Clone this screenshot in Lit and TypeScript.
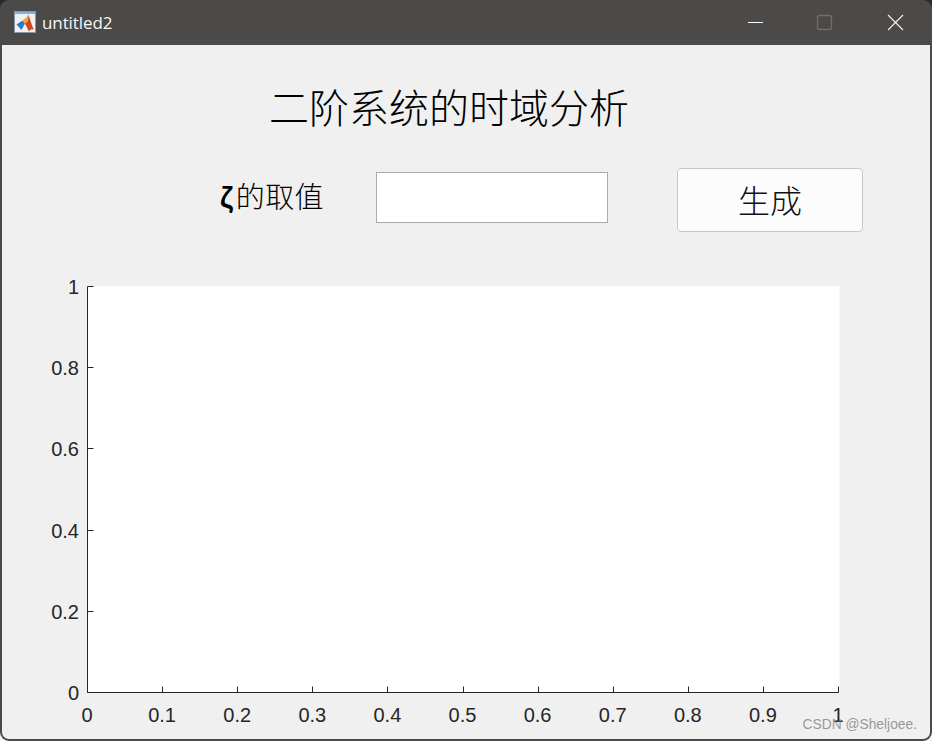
import { LitElement, html, css, svg } from "lit";
import { customElement } from "lit/decorators.js";

const XT = [0, 0.1, 0.2, 0.3, 0.4, 0.5, 0.6, 0.7, 0.8, 0.9, 1];
const YT = [0, 0.2, 0.4, 0.6, 0.8, 1];
const L = 85.5, R = 836.5, T = 47.5, B = 453.5;

@customElement("app-root")
export class AppRoot extends LitElement {
  static styles = css`
    :host { display: block; width: 932px; height: 741px; background: #fff; }
    .corner { width: 932px; height: 741px; background: linear-gradient(#2a2a2a 0 30px, #f4f4f4 30px); }
    .window {
      position: relative; box-sizing: border-box; width: 932px; height: 741px;
      display: flex; flex-direction: column; background: #4b4a48;
      border-radius: 9px; padding: 0 2px 2px; overflow: hidden;
    }
    .bar { height: 45px; flex: none; display: flex; align-items: center; color: #fff; margin: 0 -2px; }
    .logo { margin-left: 14px; width: 22px; height: 22px; flex: none; margin-top: -1px; }
    .name { margin-left: 6px; font: 17px "Open Sans", "Liberation Sans", sans-serif; color: #f6f6f6; flex: 1; margin-top: -1px; letter-spacing: -0.1px; }
    .ctl { display: block; flex: none; margin-top: 0; }
    .client { flex: 1; background: #f0f0f0; border-radius: 0 0 7px 7px; display: flex; flex-direction: column; overflow: hidden; }
    .title {
      margin: 33px 0 0 267px; height: 56px; font: 40px/56px "Noto Sans CJK SC", sans-serif;
      font-weight: 300; color: #000; white-space: nowrap;
    }
    .row { display: flex; align-items: flex-start; margin-top: 34px; height: 64px; }
    .label { margin: 6px 0 0 218px; width: 156px; font: 29px/42px "Noto Sans CJK SC", sans-serif; font-weight: 300; color: #000; white-space: nowrap; letter-spacing: 0.4px; }
    .zeta { font-family: "Liberation Sans", sans-serif; font-weight: 700; margin-right: 2px; }
    .field { box-sizing: border-box; width: 232px; height: 51px; margin-top: 4px; background: #fff; border: 1px solid #a9a9a9; }
    .btn {
      box-sizing: border-box; width: 186px; height: 64px; margin-left: 69px; background: #fcfcfc;
      border: 1px solid #c8c8c8; border-radius: 4px; font: 300 32px/60px "Noto Sans CJK SC", sans-serif; color: #111; padding: 0 0 6px;
    }
    .plot { display: block; margin-top: 7px; }
    .tick { font: 20px "Liberation Sans", sans-serif; fill: #262626; }
    .mark {
      position: absolute; right: 15px; bottom: 9px; font: 13.8px "Liberation Sans", sans-serif;
      color: rgba(135, 135, 135, 0.85);
    }
  `;

  render() {
    const xs = XT.map((v, i) => ({ v, x: L + ((R - L) * i) / 10 }));
    const ys = YT.map((v, i) => ({ v, y: B - ((B - T) * i) / 5 }));
    return html`
      <div class="corner">
        <div class="window">
          <div class="bar">
            <svg class="logo" viewBox="0 0 22 22">
              <rect x="0.5" y="0.5" width="21" height="21" fill="#eef1f5" stroke="#8a97a6" />
              <rect x="1" y="1" width="20" height="2" fill="#7fb2e0" />
              <path d="M2.5 13.5 L8.5 9.5 L11 12.5 L7.5 19 Z" fill="#2a7dc4" />
              <path d="M8.5 9.5 L12 7 L14.5 3.5 L14 10 L11 12.5 Z" fill="#f3a52f" />
              <path d="M14.5 3.5 C16 8 18 15 20 19 C18 17.5 16.5 18.5 15 20.5 C13.5 17.5 12 14.5 11 12.5 L14 10 Z" fill="#d2481e" />
            </svg>
            <span class="name">untitled2</span>
            <svg class="ctl" width="210" height="45" viewBox="0 0 210 45">
              <path d="M26 22.5 H41" stroke="#fff" fill="none" />
              <rect x="95.5" y="15.5" width="14" height="14" rx="2" stroke="#6e6e6c" stroke-width="1.4" fill="none" />
              <path d="M166 15 L181 30 M181 15 L166 30" stroke="#f2f2f2" stroke-width="1.1" fill="none" />
            </svg>
          </div>
          <div class="client">
            <div class="title">二阶系统的时域分析</div>
            <div class="row">
              <div class="label"><span class="zeta">ζ</span>的取值</div>
              <div class="field"></div>
              <button class="btn">生成</button>
            </div>
            <svg class="plot" width="928" height="455" viewBox="0 0 928 455" overflow="visible">
              <rect x="${L}" y="${T}" width="${R - L + 1}" height="${B - T}" fill="#fff" />
              <path d="M${R} ${B} H${L} V${T}" fill="none" stroke="#262626" />
              ${xs.map((t) => svg`<path d="M${Math.round(t.x - 0.5) + 0.5} ${B} v-6" stroke="#262626" />`)}
              ${ys.map((t) => svg`<path d="M${L} ${Math.round(t.y - 0.5) + 0.5} h6" stroke="#262626" />`)}
              ${xs.map((t) => svg`<text class="tick" x="${t.x - 0.5}" y="483" text-anchor="middle">${t.v}</text>`)}
              ${ys.map((t) => svg`<text class="tick" x="${L - 8.5}" y="${t.y + 7.5}" text-anchor="end">${t.v}</text>`)}
            </svg>
          </div>
          <div class="mark">CSDN @Sheljoee.</div>
        </div>
      </div>
    `;
  }
}
